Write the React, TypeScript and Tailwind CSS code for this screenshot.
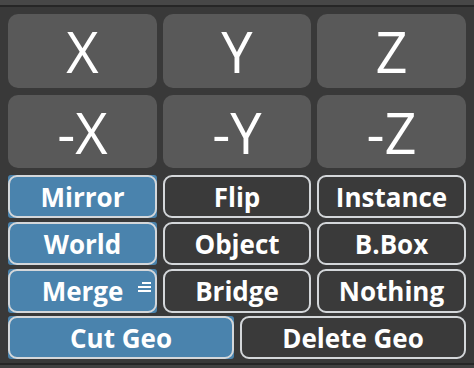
import React from "react";

const font = { fontFamily: '"Open Sans", "Noto Sans", sans-serif' };

function AxisButton({ label }: { label: string }) {
  return (
    <div className="flex h-full items-center justify-center rounded-[10px] bg-[#595959] text-[56px] font-normal leading-none text-white">
      {label}
    </div>
  );
}

function ToggleButton({
  label,
  active,
  menu,
}: {
  label: string;
  active?: boolean;
  menu?: boolean;
}) {
  return (
    <div className={active ? "h-full rounded-[3px] bg-[#4a83ad]" : "h-full rounded-[3px] bg-[#3a3a3a]"}>
      <div className="relative flex h-full items-center justify-center rounded-[9px] border-2 border-[#d4d7da] text-[26px] font-bold leading-none text-white">
        {label}
        {menu && (
          <div className="absolute right-[4px] top-[11px] flex w-[13px] flex-col gap-[2px]">
            <span className="h-[2px] w-[9px] self-end bg-white" />
            <span className="h-[2px] w-full bg-white" />
            <span className="h-[2px] w-full bg-white" />
          </div>
        )}
      </div>
    </div>
  );
}

export default function App() {
  return (
    <div className="flex h-[368px] w-[474px] flex-col bg-[#393939]" style={font}>
      <div className="h-[5px] bg-[#474747]" />
      <div className="h-[2px] bg-[#262626]" />
      <div className="flex flex-1 flex-col px-[8px] pt-[7px]">
        <div className="grid grid-cols-[149px_148px_149px] grid-rows-[74px_73px] gap-x-[6px] gap-y-[7px]">
          <AxisButton label="X" />
          <AxisButton label="Y" />
          <AxisButton label="Z" />
          <AxisButton label="-X" />
          <AxisButton label="-Y" />
          <AxisButton label="-Z" />
        </div>
        <div className="mt-[7px] grid grid-cols-[149px_148px_149px] grid-rows-[43px_43px_44px] gap-x-[6px] gap-y-[4px]">
          <ToggleButton label="Mirror" active />
          <ToggleButton label="Flip" />
          <ToggleButton label="Instance" />
          <ToggleButton label="World" active />
          <ToggleButton label="Object" />
          <ToggleButton label="B.Box" />
          <ToggleButton label="Merge" active menu />
          <ToggleButton label="Bridge" />
          <ToggleButton label="Nothing" />
        </div>
        <div className="mt-[3px] grid h-[43px] grid-cols-[226px_226px] gap-x-[6px]">
          <ToggleButton label="Cut Geo" active />
          <ToggleButton label="Delete Geo" />
        </div>
      </div>
      <div className="h-[2px] bg-[#262626]" />
      <div className="h-[3px] bg-[#414141]" />
    </div>
  );
}
